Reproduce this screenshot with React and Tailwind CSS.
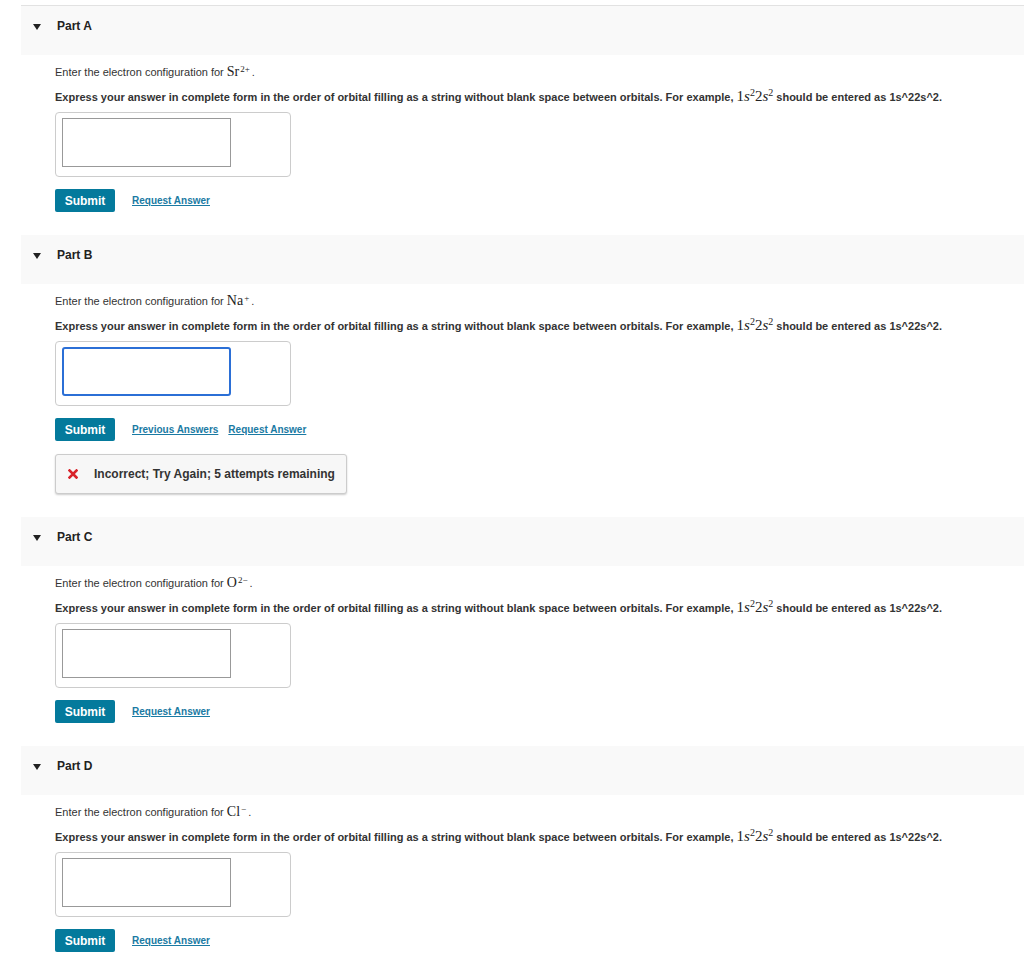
const parts = [
	{ label: "Part A", ion: "Sr", charge: "2+" },
	{ label: "Part B", ion: "Na", charge: "+", focused: true, previous: true, feedback: "Incorrect; Try Again; 5 attempts remaining" },
	{ label: "Part C", ion: "O", charge: "2−" },
	{ label: "Part D", ion: "Cl", charge: "−" },
];

const Ion = ({ ion, charge }) => (
	<span className="font-['Liberation_Serif',serif] text-[14px] leading-none text-[#222]">
		{ion}
		<sup className="text-[9px] leading-none ml-[1px]">{charge}</sup>
		<span className="ml-[2px]" />
	</span>
);

const Part = ({ label, ion, charge, focused, previous, feedback }) => (
	<section className="mb-[23px]">
		<div className="h-[49px] bg-[#f9f9f9] flex items-start pt-[13px] pl-[12px]">
			<svg width="8" height="6" viewBox="0 0 8 6" className="mr-[16px] mt-[5px]">
				<path d="M0 0 L8 0 L4 6 Z" fill="#222" />
			</svg>
			<span className="text-[12px] leading-[14px] font-bold text-[#222]">{label}</span>
		</div>
		<div className="pl-[34px]">
			<p className="mt-[10px] h-[14px] text-[11px] leading-[14px] text-[#333]">
				Enter the electron configuration for <Ion ion={ion} charge={charge} />.
			</p>
			<p className="mt-[10px] h-[14px] text-[11px] leading-[14px] font-bold text-[#333]">
				Express your answer in complete form in the order of orbital filling as a string without blank space between orbitals. For example,{" "}
				<span className="font-['Liberation_Serif',serif] font-normal text-[15px] leading-none text-[#222]">
					1<i>s</i>
					<sup className="text-[10px] leading-none">2</sup>2<i>s</i>
					<sup className="text-[10px] leading-none">2</sup>
				</span>{" "}
				should be entered as 1s^22s^2.
			</p>
			<div className="mt-[9px] w-[236px] h-[65px] border border-[#ccc] rounded-[4px] pt-[5px] pl-[6px]">
				{focused ? (
					<div className="w-[169px] h-[49px] border-2 border-[#2b6fd6] rounded-[3px] bg-white" />
				) : (
					<div className="w-[169px] h-[49px] border border-[#999] bg-white" />
				)}
			</div>
			<div className="mt-[12px] flex items-center">
				<button className="w-[60px] h-[23px] bg-[#047a9c] text-white text-[12px] font-bold rounded-[2px]">
					Submit
				</button>
				{previous && (
					<a className="ml-[17px] text-[10px] font-bold text-[#1a7aa3] underline">Previous Answers</a>
				)}
				<a className={`${previous ? "ml-[10px]" : "ml-[17px]"} text-[10px] font-bold text-[#1a7aa3] underline`}>
					Request Answer
				</a>
			</div>
			{feedback && (
				<div className="mt-[13px] w-[292px] h-[40px] border border-[#ccc] rounded-[3px] bg-[#f7f7f7] shadow-[0_1px_2px_rgba(0,0,0,0.2)] flex items-center pl-[12px]">
					<svg width="10" height="10" viewBox="0 0 10 10" className="mr-[16px]">
						<path d="M1.5 1.5 L8.5 8.5 M8.5 1.5 L1.5 8.5" stroke="#d8232a" strokeWidth="2.6" strokeLinecap="square" />
					</svg>
					<span className="text-[12px] font-bold text-[#333]">{feedback}</span>
				</div>
			)}
		</div>
	</section>
);

export default function App() {
	return (
		<div className="min-h-[971px] bg-white font-['Liberation_Sans',Arial,sans-serif]">
			<div className="pt-[5px] pl-[21px]">
				<div className="border-t border-[#e2e2e2]">
					{parts.map((p) => (
						<Part key={p.label} {...p} />
					))}
				</div>
			</div>
		</div>
	);
}
